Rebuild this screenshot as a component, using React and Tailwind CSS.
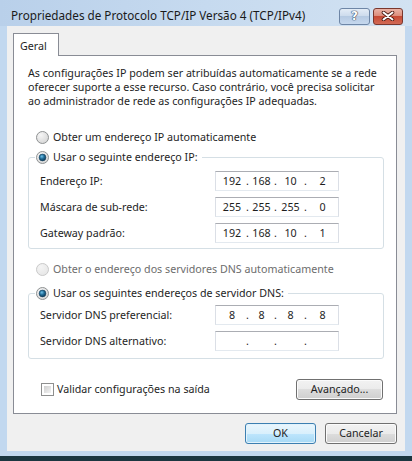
import React from "react";

function Radio({ checked, disabled, id }) {
  return (
    <svg width="13" height="13" viewBox="0 0 13 13" className="shrink-0">
      <defs>
        <radialGradient id={`rf${id}`} cx="0.35" cy="0.3" r="0.8">
          <stop offset="0" stopColor={disabled ? "#f4f4f4" : "#f6f6f6"} />
          <stop offset="1" stopColor={disabled ? "#e6e6e6" : "#d4d4d4"} />
        </radialGradient>
        <radialGradient id={`rd${id}`} cx="0.4" cy="0.35" r="0.7">
          <stop offset="0" stopColor="#6fc2ea" />
          <stop offset="0.5" stopColor="#1f6a95" />
          <stop offset="1" stopColor="#0c3550" />
        </radialGradient>
      </defs>
      <circle cx="6.5" cy="6.5" r="6" fill={`url(#rf${id})`} stroke={disabled ? "#c9c9c9" : "#8f9293"} strokeWidth="1" />
      {checked && <circle cx="6.5" cy="6.5" r="3.4" fill={`url(#rd${id})`} stroke="#16405c" strokeWidth="0.6" />}
    </svg>
  );
}

function Checkbox() {
  return (
    <div className="w-[13px] h-[13px] shrink-0 border border-[#8e8f8f] bg-white p-[2px]">
      <div className="w-full h-full bg-[linear-gradient(135deg,#cfcfcf,#f4f4f4)]" />
    </div>
  );
}

function IpBox({ parts }) {
  const widths = ["w-[28px]", "w-[25px]", "w-[27px]", "flex-1"];
  return (
    <div className="w-[124px] h-[20px] border border-[#abadb3] border-l-[#dbdfe6] border-r-[#dbdfe6] border-b-[#e3e9ef] bg-white flex items-center pl-[2px] text-[#1e1e1e]">
      {parts.map((p, i) => (
        <React.Fragment key={i}>
          <div className={`${widths[i]} text-center leading-none`}>{p}</div>
          {i < 3 && <div className="w-[3px] flex justify-center leading-none">.</div>}
        </React.Fragment>
      ))}
    </div>
  );
}

function Row({ label, parts }) {
  return (
    <div className="flex items-center h-[20px]">
      <div className="w-[175px]">{label}</div>
      <IpBox parts={parts} />
    </div>
  );
}

function Button({ children, def, className = "" }) {
  return (
    <div
      className={`h-[21px] rounded-[3px] border flex items-center justify-center ${
        def
          ? "border-[#3c7fb1] bg-[linear-gradient(#eaf6fd_0%,#d9f0fc_50%,#bee6fd_50%,#a7d9f5_100%)] shadow-[inset_0_0_0_1px_#e2f3fc]"
          : "border-[#707070] bg-[linear-gradient(#f2f2f2_0%,#ebebeb_50%,#dddddd_50%,#cfcfcf_100%)] shadow-[inset_0_0_0_1px_#fbfbfb]"
      } ${className}`}
    >
      {children}
    </div>
  );
}

export default function App() {
  return (
    <div className="w-[412px] h-[461px] flex flex-col overflow-hidden bg-[#c2d8ef] font-['Noto_Sans',sans-serif] text-[10.7px] text-[#1e1e1e]">
      {/* Title bar */}
      <div className="h-[28px] pt-[6px] flex items-center pl-[11px] pr-[9px] bg-[linear-gradient(90deg,#b9d0ea_0%,#c6daef_50%,#d2e2f2_100%)]">
        <div className="flex-1 text-[11.7px] text-[#1a1a1a]">Propriedades de Protocolo TCP/IP Versão 4 (TCP/IPv4)</div>
        <div className="flex gap-[3px]">
          <div className="w-[31px] h-[17px] rounded-[3px] border border-[#6e86a6] bg-[linear-gradient(#e3ecf6_0%,#cbdaec_50%,#b6cae2_50%,#c6d8ee_100%)] flex items-center justify-center">
            <span className="text-white font-bold text-[12px] leading-none [text-shadow:0_0_1px_#2c3e5a,0_0_1px_#2c3e5a,0_0_1px_#2c3e5a] font-['DejaVu_Sans',sans-serif]">?</span>
          </div>
          <div className="w-[30px] h-[17px] rounded-[3px] border border-[#7a372d] bg-[linear-gradient(#eab2a5_0%,#db8a78_50%,#c74a34_50%,#d26a55_100%)] flex items-center justify-center">
            <svg width="14" height="10" viewBox="0 0 14 10">
              <path d="M2.5 1.5 L11.5 8.5 M11.5 1.5 L2.5 8.5" stroke="#4a1a12" strokeWidth="3.6" strokeLinecap="round" />
              <path d="M2.5 1.5 L11.5 8.5 M11.5 1.5 L2.5 8.5" stroke="#ffffff" strokeWidth="2" strokeLinecap="round" />
            </svg>
          </div>
        </div>
      </div>

      {/* Client area */}
      <div className="flex-1 mx-[7px] bg-[#f0f0f0] flex flex-col pt-[7px] pl-[6px] pr-[8px] pb-[7px]">
        {/* Tab */}
        <div className="flex">
          <div className="relative z-10 -mb-px w-[46px] h-[23px] bg-white border border-b-0 border-[#898c95] pl-[6px] pt-[4px]">Geral</div>
        </div>
        {/* Panel */}
        <div className="bg-white border border-[#898c95] pl-[14px] pr-[12px] pt-[10px] pb-[13px]">
          <p className="leading-[14px] whitespace-nowrap">
            As configurações IP podem ser atribuídas automaticamente se a rede
            <br />
            oferecer suporte a esse recurso. Caso contrário, você precisa solicitar
            <br />
            ao administrador de rede as configurações IP adequadas.
          </p>

          <div className="mt-[21px] h-[16px] pl-[8px] flex items-center gap-[4px]">
            <Radio id="a" />
            <span>Obter um endereço IP automaticamente</span>
          </div>

          <fieldset className="mt-[4px] border border-[#d5dfe5] rounded-[3px]">
            <legend className="ml-[6px] pl-[1px] pr-[4px]">
              <div className="h-[16px] flex items-center gap-[4px]">
                <Radio id="b" checked />
                <span>Usar o seguinte endereço IP:</span>
              </div>
            </legend>
            <div className="flex flex-col gap-[6px] pl-[11px] pt-[6px] pb-[5px]">
              <Row label="Endereço IP:" parts={["192", "168", "10", "2"]} />
              <Row label="Máscara de sub-rede:" parts={["255", "255", "255", "0"]} />
              <Row label="Gateway padrão:" parts={["192", "168", "10", "1"]} />
            </div>
          </fieldset>

          <div className="mt-[12px] h-[16px] pl-[8px] flex items-center gap-[4px] text-[#6d6d6d]">
            <Radio id="c" disabled />
            <span>Obter o endereço dos servidores DNS automaticamente</span>
          </div>

          <fieldset className="mt-[8px] border border-[#d5dfe5] rounded-[3px]">
            <legend className="ml-[6px] pl-[1px] pr-[4px]">
              <div className="h-[16px] flex items-center gap-[4px]">
                <Radio id="d" checked />
                <span>Usar os seguintes endereços de servidor DNS:</span>
              </div>
            </legend>
            <div className="flex flex-col gap-[6px] pl-[11px] pt-[4px] pb-[7px]">
              <Row label="Servidor DNS preferencial:" parts={["8", "8", "8", "8"]} />
              <Row label="Servidor DNS alternativo:" parts={["", "", "", ""]} />
            </div>
          </fieldset>

          <div className="mt-[20px] flex items-center justify-between pl-[13px] pr-[1px]">
            <div className="flex items-center gap-[3px]">
              <Checkbox />
              <span>Validar configurações na saída</span>
            </div>
            <Button className="w-[87px]">Avançado...</Button>
          </div>
        </div>

        {/* Bottom buttons */}
        <div className="mt-[9px] flex justify-end gap-[9px]">
          <Button def className="w-[71px]">OK</Button>
          <Button className="w-[72px]">Cancelar</Button>
        </div>
      </div>
      <div className="h-[6px]" />
      <div className="h-[5px] bg-[#1b3640]" />
    </div>
  );
}
